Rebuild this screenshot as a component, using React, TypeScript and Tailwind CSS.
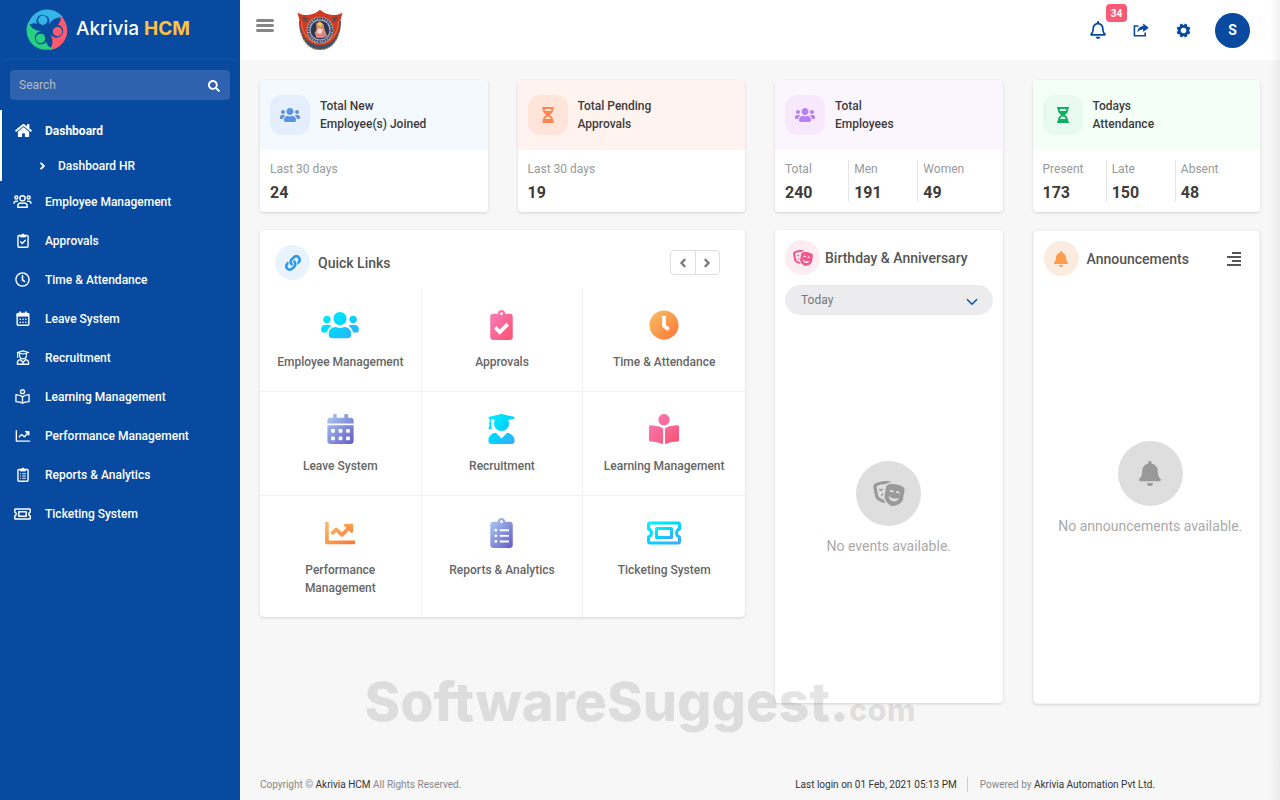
import React, { useState } from "react";
import {
  FaAngleLeft,
  FaAngleRight,
  FaBell,
  FaBookReader,
  FaCalendarAlt,
  FaChartLine,
  FaClipboardCheck,
  FaClipboardList,
  FaClock,
  FaHome,
  FaHourglassHalf,
  FaLink,
  FaRegBell,
  FaRegClock,
  FaSearch,
  FaTheaterMasks,
  FaUserGraduate,
  FaUsers,
} from "react-icons/fa";

type IconProps = { className?: string; fill?: string; stroke?: string };
type IconType = React.ComponentType<IconProps>;

// ==========================================
// 1. OUTLINE ICONS
// ==========================================

const Outline: React.FC<{ box: string; className?: string; children: React.ReactNode }> = ({ box, className = "", children }) => (
  <svg
    viewBox={box}
    className={className}
    fill="none"
    stroke="currentColor"
    strokeWidth="1.5"
    strokeLinecap="round"
    strokeLinejoin="round"
    aria-hidden="true"
  >
    {children}
  </svg>
);

const UsersOutline: IconType = ({ className }) => (
  <Outline box="0 0 20 16" className={className}>
    <circle cx="10" cy="4.6" r="2.8" />
    <circle cx="3.4" cy="3.8" r="1.6" />
    <circle cx="16.6" cy="3.8" r="1.6" />
    <path d="M5 14.2v-1.4c0-2 1.4-3.2 3.2-3.2.6 0 1 .3 1.8.3s1.2-.3 1.8-.3c1.8 0 3.2 1.2 3.2 3.2v1.4z" />
    <path d="M1 9.8c0-1.2.8-2 2-2h1.6M19 9.8c0-1.2-.8-2-2-2h-1.6" />
  </Outline>
);

const ClipboardShell = () => (
  <>
    <rect x=".8" y="2.6" width="10.8" height="12.6" rx="1" />
    <path d="M3.6 2.6h1.2a1.4 1.4 0 0 1 2.8 0h1.2v1.6H3.6z" fill="currentColor" strokeWidth="1" />
  </>
);

const ClipboardCheckOutline: IconType = ({ className }) => (
  <Outline box="0 0 12.4 16" className={className}>
    <ClipboardShell />
    <path d="M3.7 9.4l1.7 1.7 3.3-3.4" />
  </Outline>
);

const ClipboardListOutline: IconType = ({ className }) => (
  <Outline box="0 0 12.4 16" className={className}>
    <ClipboardShell />
    <path d="M5.8 7.2h3M5.8 9.6h3M5.8 12h3M3.6 7.2h.1M3.6 9.6h.1M3.6 12h.1" strokeWidth="1" />
  </Outline>
);

const CalendarOutline: IconType = ({ className }) => (
  <Outline box="0 0 14 16" className={className}>
    <rect x=".8" y="2.6" width="12.4" height="12.6" rx="1" />
    <path d="M1 3h12v2.4H1z" fill="currentColor" strokeWidth="1" />
    <path d="M4 1v2M10 1v2" strokeWidth="1.7" />
    <path d="M4 8.8h.1M7 8.8h.1M10 8.8h.1M4 12h.1M7 12h.1M10 12h.1" strokeWidth="1.6" />
  </Outline>
);

const GraduateOutline: IconType = ({ className }) => (
  <Outline box="0 0 14 16" className={className}>
    <path d="M1 2.6L7 .9l6 1.700-6 1.700z" strokeWidth="1.2" />
    <path d="M3.4 3.6v2.2a3.6 3.6 0 0 0 7.2 0V3.600M1.300 3v4.600" strokeWidth="1.3" />
    <path d="M1 15.200v-1.600c0-1.700 1.200-2.900 3.200-3.300L7 13l2.800-2.700c2 .4 3.200 1.600 3.200 3.300v1.600zM7 13v2" strokeWidth="1.4" />
  </Outline>
);

const ReaderOutline: IconType = ({ className }) => (
  <Outline box="0 0 16 16" className={className}>
    <circle cx="8" cy="2.9" r="2.1" strokeWidth="1.4" />
    <path d="M8 8.400C6.300 7 4 6.200 1 6.100v7.400c3 .1 5.300.5 7 1.600 1.700-1.100 4-1.500 7-1.600V6.100c-3 .1-5.300.9-7 2.300zM8 8.400v6.600" strokeWidth="1.4" />
  </Outline>
);

const ChartOutline: IconType = ({ className }) => (
  <Outline box="0 0 16 13" className={className}>
    <path d="M.8.8V12h14.400M4 7.200l2.500-2.400 3 2.600 4-4.200M10.800 1.800h3.400v3.400" />
    <path d="M11.300 2h2.800v2.800z" fill="currentColor" strokeWidth=".8" />
  </Outline>
);

const TicketShape: IconType = ({ className, stroke = "currentColor" }) => (
  <svg viewBox="0 0 34 24" className={className} fill="none" stroke={stroke} strokeWidth="3" strokeLinejoin="round" aria-hidden="true">
    <path d="M3 2h28a1.500 1.500 0 0 1 1.500 1.500V8a4.200 4.200 0 0 0 0 8v4.500A1.500 1.500 0 0 1 31 22H3a1.500 1.500 0 0 1-1.500-1.500V16a4.200 4.200 0 0 0 0-8V3.500A1.500 1.500 0 0 1 3 2z" />
    <path d="M9.500 7.500h15v9h-15z" />
  </svg>
);

const ShareOut: IconType = ({ className }) => (
  <svg viewBox="0 0 16 14" className={className} fill="none" stroke="currentColor" aria-hidden="true">
    <path d="M5.500 3H1.400v9.800h10.800V9.600" strokeWidth="1.6" />
    <path d="M10.200.6L15.800 4.700l-5.600 4.200V6.600C7.500 6.500 5.800 7.400 4.400 9.700c.2-4 2.100-6.500 5.800-6.800z" fill="currentColor" stroke="none" />
  </svg>
);

// Eight stubby teeth round a wide-open ring
const Gear: IconType = ({ className }) => (
  <svg viewBox="0 0 16 16" className={className} fill="none" stroke="currentColor" aria-hidden="true">
    <circle cx="8" cy="8" r="4.500" strokeWidth="3" />
    {[22.5, 67.5, 112.5, 157.5].map((angle) => (
      <path key={angle} d="M8 .700v2.800M8 12.500v2.800" strokeWidth="3.200" strokeLinejoin="round" transform={`rotate(${angle} 8 8)`} />
    ))}
  </svg>
);

// ==========================================
// 2. LOGOS
// ==========================================

const markArms = [
  { color: "#37b4e6", angle: 0 },
  { color: "#fb5b6e", angle: 122 },
  { color: "#27cf83", angle: 241 },
];

const AkriviaMark = () => (
  <svg viewBox="0 0 42 42" className="h-[42px] w-[42px] shrink-0" aria-hidden="true">
    {markArms.map(({ color, angle }) => (
      <g key={color} fill={color} transform={`rotate(${angle} 21 21)`}>
        <path d="M1.600 17.200C3.500 7.500 11.500.6 21 .6c6.800 0 12.700 3.200 16.200 8.200-5.200-1.300-10.600.7-14.500 6.900.7-1.400.9-3 .6-4.500a6.500 6.500 0 0 0-12.700-.4c-.3 1.500-.1 2.800.4 4-3.700-1.600-7 .3-9.400 2.400z" />
        <circle cx="16.800" cy="11.300" r="4.700" />
      </g>
    ))}
  </svg>
);

const CompanyCrest = () => (
  <svg viewBox="0 0 46 42" className="h-[42px] w-[46px]" role="img" aria-label="Company crest">
    <path d="M2 12c0 16 8 29 21 29s21-13 21-29z" fill="#3d5068" />
    <path d="M4 24c3 10 9 16.500 19 16.500S39 34 42 24" fill="none" stroke="#b89b4a" strokeWidth="1.2" strokeDasharray="2 1.5" />
    <path d="M.5 3.500c4 2.500 8 3 12 2.300C17 5 20 3.500 23 .8c3 2.700 6 4.200 10.500 5 4 .7 8 .2 12-2.300l-2 8C43 25 36 36.500 23 36.500S3 25 2.500 11.500z" fill="#cf3a20" />
    <path d="M4.500 12C5 25 11.500 33.500 23 33.500S41 25 41.500 12" fill="none" stroke="#e8643c" strokeWidth="1.2" />
    <path d="M5.500 8.500l5 1.500M35.500 10l5-1.500M6.500 11l4 .5M35.500 11.500l4-.5" stroke="#5e4a48" strokeWidth="2" />
    <circle cx="23" cy="21" r="13.300" fill="#c4c9d4" />
    <circle cx="23" cy="21" r="11.600" fill="none" stroke="#434a63" strokeWidth="2.600" strokeDasharray="2 .6" />
    <circle cx="23" cy="21" r="9.500" fill="#29364f" />
    <path d="M19 14.500l3.500-2 4 2.500 1 5 2.500 7-4.500 2h-6l-2-5 2-3.500z" fill="#d78b71" />
    <path d="M20 15l3-2.500 2.500 2.500-2 3z" fill="#efc35b" />
    <path d="M21 19l5 1.500-2 4.500-4-1z" fill="#f4d9c8" />
    <path d="M18.500 25l4 1 5-1.500-1.500 4-5 .5z" fill="#e57898" />
  </svg>
);

const Gradients = () => (
  <svg width="0" height="0" className="absolute" aria-hidden="true">
    <defs>
      <linearGradient id="grad-cyan" x1="0" y1="0" x2="1" y2="1">
        <stop offset="0" stopColor="#00f2fe" />
        <stop offset=".5" stopColor="#00d5ff" />
        <stop offset="1" stopColor="#3fa9fa" />
      </linearGradient>
      <linearGradient id="grad-pink" x1="0" y1="0" x2="1" y2="1">
        <stop offset="0" stopColor="#f77fbe" />
        <stop offset="1" stopColor="#fb5170" />
      </linearGradient>
      <linearGradient id="grad-orange" x1="0" y1="0" x2="1" y2="1">
        <stop offset="0" stopColor="#f8c163" />
        <stop offset="1" stopColor="#fd7436" />
      </linearGradient>
      <linearGradient id="grad-violet" x1="0" y1="0" x2="1" y2="1">
        <stop offset="0" stopColor="#a9cdf2" />
        <stop offset="1" stopColor="#665bc4" />
      </linearGradient>
    </defs>
  </svg>
);

// ==========================================
// 3. DATA
// ==========================================

interface NavItem {
  label: string;
  icon: IconType;
  size: string;
}

const navItems: NavItem[] = [
  { label: "Employee Management", icon: UsersOutline, size: "h-[15px] w-[19px]" },
  { label: "Approvals", icon: ClipboardCheckOutline, size: "h-[15px] w-3" },
  { label: "Time & Attendance", icon: FaRegClock, size: "h-[15px] w-[15px]" },
  { label: "Leave System", icon: CalendarOutline, size: "h-[15px] w-[14px]" },
  { label: "Recruitment", icon: GraduateOutline, size: "h-[15px] w-[14px]" },
  { label: "Learning Management", icon: ReaderOutline, size: "h-[15px] w-[15px]" },
  { label: "Performance Management", icon: ChartOutline, size: "h-3 w-4" },
  { label: "Reports & Analytics", icon: ClipboardListOutline, size: "h-[15px] w-3" },
  { label: "Ticketing System", icon: TicketShape, size: "h-3 w-[17px]" },
];

interface StatCard {
  title: [string, string];
  icon: IconType;
  iconSize: string;
  headClass: string;
  iconClass: string;
  stats: { label: string; value: number }[];
}

const statCards: StatCard[] = [
  {
    title: ["Total New", "Employee(s) Joined"],
    icon: FaUsers,
    iconSize: "h-4 w-5",
    headClass: "bg-[#f4f9ff]",
    iconClass: "bg-[#e4eefd] text-[#5b93dc]",
    stats: [{ label: "Last 30 days", value: 24 }],
  },
  {
    title: ["Total Pending", "Approvals"],
    icon: FaHourglassHalf,
    iconSize: "h-4 w-3",
    headClass: "bg-[#fff3ef]",
    iconClass: "bg-[#ffe4d9] text-[#ff864f]",
    stats: [{ label: "Last 30 days", value: 19 }],
  },
  {
    title: ["Total", "Employees"],
    icon: FaUsers,
    iconSize: "h-4 w-5",
    headClass: "bg-[#fbf6fe]",
    iconClass: "bg-[#f7e8fc] text-[#b97ff5]",
    stats: [
      { label: "Total", value: 240 },
      { label: "Men", value: 191 },
      { label: "Women", value: 49 },
    ],
  },
  {
    title: ["Todays", "Attendance"],
    icon: FaHourglassHalf,
    iconSize: "h-4 w-3",
    headClass: "bg-[#f4fff7]",
    iconClass: "bg-[#e8f9f0] text-[#0cb262]",
    stats: [
      { label: "Present", value: 173 },
      { label: "Late", value: 150 },
      { label: "Absent", value: 48 },
    ],
  },
];

interface QuickLink {
  label: string;
  icon: IconType;
  gradient: string;
  size: string;
}

const quickLinks: QuickLink[] = [
  { label: "Employee Management", icon: FaUsers, gradient: "url(#grad-cyan)", size: "h-[30px] w-[38px]" },
  { label: "Approvals", icon: FaClipboardCheck, gradient: "url(#grad-pink)", size: "h-[30px] w-[23px]" },
  { label: "Time & Attendance", icon: FaClock, gradient: "url(#grad-orange)", size: "h-[30px] w-[30px]" },
  { label: "Leave System", icon: FaCalendarAlt, gradient: "url(#grad-violet)", size: "h-[30px] w-[27px]" },
  { label: "Recruitment", icon: FaUserGraduate, gradient: "url(#grad-cyan)", size: "h-[30px] w-[27px]" },
  { label: "Learning Management", icon: FaBookReader, gradient: "url(#grad-pink)", size: "h-[30px] w-[30px]" },
  { label: "Performance Management", icon: FaChartLine, gradient: "url(#grad-orange)", size: "h-[30px] w-[30px]" },
  { label: "Reports & Analytics", icon: FaClipboardList, gradient: "url(#grad-violet)", size: "h-[30px] w-[23px]" },
  { label: "Ticketing System", icon: TicketShape, gradient: "url(#grad-cyan)", size: "h-[24px] w-[34px]" },
];

// ==========================================
// 4. LAYOUT PARTS
// ==========================================

const Sidebar = () => (
  <aside className="w-[240px] shrink-0 bg-[#074a9f] text-white">
    <a href="#" className="mx-[3px] flex h-[60px] items-center gap-2 border-b border-[#17549f] pl-[23px]">
      <AkriviaMark />
      <span className="font-['Inter',sans-serif] text-[19px] font-medium">
        Akrivia <span className="font-bold text-[#fdc23e]">HCM</span>
      </span>
    </a>

    <form className="mx-2.5 mt-2.5 flex h-[30px] items-center rounded bg-[#2e62ae] px-[9px]" onSubmit={(e) => e.preventDefault()}>
      <input
        type="search"
        aria-label="Search"
        placeholder="Search"
        className="min-w-0 flex-1 bg-transparent text-xs text-white outline-none placeholder:text-[#b9bcc0]"
      />
      <button type="submit" aria-label="Submit search" className="pt-0.5 pr-px">
        <FaSearch className="h-3 w-3" />
      </button>
    </form>

    <nav className="mt-2.5 text-xs font-medium">
      <div className="border-l-2 border-white">
        <a href="#" className="flex h-[41px] items-center gap-3 pl-3 font-bold">
          <span className="flex w-[19px] justify-center">
            <FaHome className="h-[15px] w-[17px]" />
          </span>
          Dashboard
        </a>
        <a href="#" className="flex h-[30px] items-center gap-3 pl-[37px]">
          <FaAngleRight className="h-3 w-[7px]" />
          Dashboard HR
        </a>
      </div>
      <ul className="mt-px">
        {navItems.map(({ label, icon: Icon, size }) => (
          <li key={label}>
            <a href="#" className="flex h-[39px] items-center gap-[13px] pl-[13px]">
              <span className="flex w-[19px] shrink-0 justify-center">
                <Icon className={size} />
              </span>
              {label}
            </a>
          </li>
        ))}
      </ul>
    </nav>
  </aside>
);

const TopBar = () => (
  <header className="flex h-[60px] items-center bg-white pr-[30px] pl-4 text-[#074a9f]">
    <button type="button" aria-label="Toggle menu" className="mb-[9px] flex w-[18px] flex-col gap-0.5">
      <span className="h-[3px] rounded-sm bg-[#868686]" />
      <span className="h-[3px] rounded-sm bg-[#868686]" />
      <span className="h-[3px] rounded-sm bg-[#868686]" />
    </button>
    <div className="ml-[23px]">
      <CompanyCrest />
    </div>
    <div className="ml-auto flex items-center">
      <button type="button" aria-label="Notifications" className="relative mr-[27px]">
        <FaRegBell className="h-[18px] w-4" />
        <span className="absolute -top-[17px] left-4 flex h-[18px] w-[21px] items-center justify-center rounded bg-[#fb5a74] text-[10px] font-bold text-white">
          34
        </span>
      </button>
      <button type="button" aria-label="Share" className="mr-[27px]">
        <ShareOut className="h-[14px] w-4" />
      </button>
      <button type="button" aria-label="Settings" className="mr-6">
        <Gear className="h-[15px] w-[15px]" />
      </button>
      <button type="button" className="flex h-[35px] w-[35px] items-center justify-center rounded-full bg-[#074a9f] text-sm font-bold text-white">
        S
      </button>
    </div>
  </header>
);

const Card: React.FC<{ className?: string; children: React.ReactNode }> = ({ className = "", children }) => (
  <section className={`rounded bg-white shadow-[0_1px_3px_rgba(0,0,0,0.15)] ${className}`}>{children}</section>
);

const StatTile: React.FC<{ card: StatCard }> = ({ card }) => {
  const { title, icon: Icon, iconSize, headClass, iconClass, stats } = card;
  return (
    <Card className="overflow-hidden">
      <div className={`flex h-[70px] items-center gap-2.5 px-2.5 ${headClass}`}>
        <span className={`flex h-10 w-10 shrink-0 items-center justify-center rounded-xl ${iconClass}`}>
          <Icon className={iconSize} />
        </span>
        <h2 className="text-xs leading-[18px] font-medium text-[#3f3b3b]">
          {title[0]}
          <br />
          {title[1]}
        </h2>
      </div>
      <dl className="grid grid-cols-3 p-2.5">
        {stats.map((stat, idx) => (
          <div key={stat.label} className={idx < stats.length - 1 ? "mr-[5px] border-r border-[#e6e6e6]" : "whitespace-nowrap"}>
            <dt className="text-xs leading-[18px] whitespace-nowrap text-[#999]">{stat.label}</dt>
            <dd className="mt-[5px] text-base leading-[19px] font-bold text-[#3f3b3b]">{stat.value}</dd>
          </div>
        ))}
      </dl>
    </Card>
  );
};

const QuickLinksPanel = () => (
  <Card className="overflow-hidden">
    <div className="flex h-[58px] items-center pt-[7px] pr-[25px] pl-[15px]">
      <span className="flex h-[35px] w-[35px] items-center justify-center rounded-full bg-[#e8f3fd]">
        <FaLink className="h-4 w-4 text-[#2898ef]" />
      </span>
      <h2 className="ml-2 text-sm font-medium text-[#555]">Quick Links</h2>
      <div className="ml-auto flex h-[25px] w-[50px] rounded border border-[#dedede] text-[#777]">
        <button type="button" aria-label="Previous" className="flex flex-1 items-center justify-center border-r border-[#dedede]">
          <FaAngleLeft className="h-[14px] w-3" />
        </button>
        <button type="button" aria-label="Next" className="flex flex-1 items-center justify-center">
          <FaAngleRight className="h-[14px] w-3" />
        </button>
      </div>
    </div>
    <div className="grid grid-cols-3">
      {quickLinks.map(({ label, icon: Icon, gradient, size }, idx) => (
        <a
          key={label}
          href="#"
          className={`flex flex-col items-center border-[#f2f2f2] px-3 pt-[22px] pb-5 text-center text-xs leading-[18px] font-medium text-[#666] ${
            idx % 3 < 2 ? "border-r" : ""
          } ${idx < 6 ? "border-b" : ""}`}
        >
          <span className="mb-[13px] flex h-[30px] items-center">
            {Icon === TicketShape ? <Icon className={size} stroke={gradient} /> : <Icon className={size} fill={gradient} />}
          </span>
          <span className={label === "Performance Management" ? "w-[100px]" : ""}>{label}</span>
        </a>
      ))}
    </div>
  </Card>
);

const EmptyState: React.FC<{ icon: IconType; iconSize: string; text: string }> = ({ icon: Icon, iconSize, text }) => (
  <div className="flex flex-col items-center gap-2.5">
    <span className="flex h-[65px] w-[65px] items-center justify-center rounded-full bg-[#dedede]">
      <Icon className={`text-[#999] ${iconSize}`} />
    </span>
    <p className="text-sm whitespace-nowrap text-[#aaa]">{text}</p>
  </div>
);

const BirthdayPanel = () => {
  const [range, setRange] = useState("Today");
  return (
    <Card className="flex min-h-[473px] flex-col p-2.5">
      <div className="flex items-center gap-[5px]">
        <span className="flex h-[35px] w-[35px] items-center justify-center rounded-full bg-[#fdecf1]">
          <FaTheaterMasks className="h-4 w-5 text-[#f0588d]" />
        </span>
        <h2 className="text-sm font-medium text-[#555]">Birthday &amp; Anniversary</h2>
      </div>
      <div className="relative mt-2.5">
        <select
          aria-label="Event period"
          value={range}
          onChange={(e) => setRange(e.target.value)}
          className="h-[30px] w-full appearance-none rounded-full bg-[#ececee] px-4 text-xs text-[#777]"
        >
          <option>Today</option>
          <option>Tomorrow</option>
          <option>This week</option>
        </select>
        <svg viewBox="0 0 12 8" className="pointer-events-none absolute top-[13px] right-[15px] h-2 w-3" fill="none" stroke="#0b4aa8" strokeWidth="1.5" aria-hidden="true">
          <path d="M1 1.200l5 5 5-5" />
        </svg>
      </div>
      <div className="flex flex-1 items-center justify-center pt-2">
        <EmptyState icon={FaTheaterMasks} iconSize="h-[25px] w-8" text="No events available." />
      </div>
    </Card>
  );
};

const AnnouncementsPanel = () => (
  <Card className="flex min-h-[474px] flex-col border border-[#f2f2f2] p-2.5">
    <div className="flex items-center gap-2">
      <span className="flex h-[35px] w-[35px] items-center justify-center rounded-full bg-[#fcecdf]">
        <FaBell className="h-4 w-[14px] text-[#ff9c4b]" />
      </span>
      <h2 className="text-sm font-medium text-[#555]">Announcements</h2>
      <button type="button" aria-label="Announcement options" className="mr-2 ml-auto">
        <svg viewBox="0 0 14 14" className="h-[14px] w-[14px]" fill="none" stroke="#555" strokeWidth="2" aria-hidden="true">
          <path d="M5 1h9M0 5h14M5 9h9M0 13h14" />
        </svg>
      </button>
    </div>
    <div className="flex flex-1 items-center justify-center pt-2 pl-2">
      <EmptyState icon={FaBell} iconSize="h-[25px] w-[22px]" text="No announcements available." />
    </div>
  </Card>
);

const Footer = () => (
  <footer className="mt-auto flex items-center px-5 pb-2 text-[10px] leading-[15px] text-[#888]">
    <p>
      Copyright © <span className="text-[#333]">Akrivia HCM</span> All Rights Reserved.
    </p>
    <p className="ml-auto border-r border-[#ccc] pr-2.5 text-[#333]">Last login on 01 Feb, 2021 05:13 PM</p>
    <p className="mr-[105px] pl-3">
      Powered by <span className="text-[#333]">Akrivia Automation Pvt Ltd.</span>
    </p>
  </footer>
);

// ==========================================
// 5. PAGE
// ==========================================

export default function App() {
  return (
    <div className="relative flex min-h-screen bg-[#f7f7f7] font-['Roboto',sans-serif]">
      <Gradients />
      <Sidebar />
      <div className="flex min-w-0 flex-1 flex-col">
        <TopBar />
        <main className="grid grid-cols-4 items-start gap-x-[30px] gap-y-[18px] p-5">
          {statCards.map((card) => (
            <StatTile key={card.title.join(" ")} card={card} />
          ))}
          <div className="col-span-2">
            <QuickLinksPanel />
          </div>
          <BirthdayPanel />
          <AnnouncementsPanel />
        </main>
        <Footer />
      </div>

      {/* Watermark over the page */}
      <div className="pointer-events-none absolute inset-x-0 top-[668px] text-center font-['Inter',sans-serif] text-[54px] leading-[68px] font-extrabold text-black/10">
        SoftwareSuggest.<span className="text-[31px]">com</span>
      </div>

      {/* Edge shadow of the drawer parked off the right side */}
      <div className="pointer-events-none absolute inset-y-0 right-0 w-2.5 bg-linear-to-r from-transparent to-black/5" />
    </div>
  );
}
